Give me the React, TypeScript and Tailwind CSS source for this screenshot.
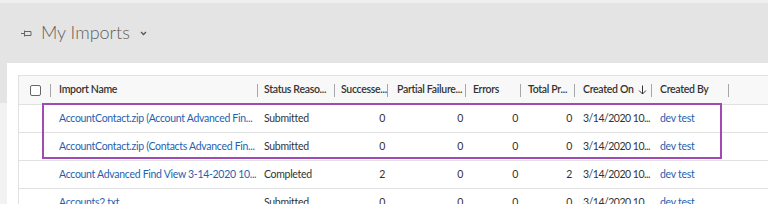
import React from "react";

type Col = { key: string; label: string; w: string; pad: string; num?: boolean; sort?: boolean };

const cols: Col[] = [
  { key: "name", label: "Import Name", w: "w-[206px]", pad: "pl-[8px]" },
  { key: "status", label: "Status Reaso...", w: "w-[76px]", pad: "pl-[6px]" },
  { key: "succ", label: "Successe...", w: "w-[52px]", pad: "pl-[6px]", num: true },
  { key: "partial", label: "Partial Failure...", w: "w-[77px]", pad: "pl-[9px]", num: true },
  { key: "errors", label: "Errors", w: "w-[54px]", pad: "pl-[7px]", num: true },
  { key: "total", label: "Total Pr...", w: "w-[53px]", pad: "pl-[7px]", num: true },
  { key: "created", label: "Created On", w: "w-[76px]", pad: "pl-[8px]", sort: true },
  { key: "by", label: "Created By", w: "w-[76px]", pad: "pl-[8px]" },
];

const rows: Record<string, string>[] = [
  { name: "AccountContact.zip (Account Advanced Fin...", status: "Submitted", succ: "0", partial: "0", errors: "0", total: "0", created: "3/14/2020 10...", by: "dev test" },
  { name: "AccountContact.zip (Contacts Advanced Fin...", status: "Submitted", succ: "0", partial: "0", errors: "0", total: "0", created: "3/14/2020 10...", by: "dev test" },
  { name: "Account Advanced Find View 3-14-2020 10...", status: "Completed", succ: "2", partial: "0", errors: "0", total: "2", created: "3/14/2020 10...", by: "dev test" },
  { name: "Accounts2.txt", status: "Submitted", succ: "0", partial: "0", errors: "0", total: "0", created: "3/14/2020 10...", by: "dev test" },
];

function Sep() {
  return <span className="w-px h-[13px] bg-[#a6a6a6] shrink-0" />;
}

export default function App() {
  return (
    <div
      className="w-[768px] h-[204px] overflow-hidden bg-[#e4e4e4] flex flex-col text-[#333]"
      style={{ fontFamily: 'Lato, "Open Sans", sans-serif' }}
    >
      {/* top strip */}
      <div className="h-[3px] bg-[#efefef] shrink-0" />

      {/* Title */}
      <div className="h-[60px] shrink-0 flex items-center pl-[21px] pb-[1px]">
        <svg width="11" height="7" viewBox="0 0 11 7" className="mr-[9px] mt-[2px]">
          <path d="M0 3.5H3.5M3.5 0.5V6.5M3.5 1.5H10V5.5H3.5" fill="none" stroke="#666" strokeWidth="1" />
        </svg>
        <span className="text-[18px] font-light text-[#5f5f5f]">My Imports</span>
        <svg width="7" height="5" viewBox="0 0 7 5" className="ml-[10px] mt-[1px]">
          <path d="M1 1L3.5 3.5L6 1" fill="none" stroke="#555" strokeWidth="1.3" />
        </svg>
      </div>

      {/* Body */}
      <div className="flex-1 flex min-h-0">
        <div className="w-[7px] shrink-0 flex flex-col">
          <div className="h-[40px] bg-[#e4e4e4]" />
          <div className="flex-1 bg-[#f2f2f2]" />
        </div>
        <div className="flex-1 bg-white pt-[12px] pl-[11px]">
          <div className="relative border-l border-t border-[#e1e1e1] text-[10.5px] tracking-[-0.3px]">
            {/* Header */}
            <div className="h-[29px] bg-[#f8f8f8] border-b border-[#e1e1e1] flex items-center text-[#333]">
              <div className="w-[31px] shrink-0 flex items-center justify-center pl-[1px]">
                <span className="w-[11px] h-[11px] border border-[#666] rounded-[2px] bg-white" />
              </div>
              <Sep />
              {cols.map((c) => (
                <React.Fragment key={c.key}>
                  <div className={`${c.w} ${c.pad} shrink-0 whitespace-nowrap overflow-hidden flex items-center font-semibold`}>
                    <span>{c.label}</span>
                    {c.sort && (
                      <svg width="9" height="10" viewBox="0 0 9 10" className="ml-[4px]">
                        <path d="M4.5 0.5V9M1 5.5L4.5 9L8 5.5" fill="none" stroke="#333" strokeWidth="1" />
                      </svg>
                    )}
                  </div>
                  <Sep />
                </React.Fragment>
              ))}
            </div>

            {/* Rows */}
            {rows.map((r, ri) => (
              <div key={ri} className="h-[28px] border-b border-[#e1e1e1] flex items-center whitespace-nowrap">
                <div className="w-[32px] shrink-0" />
                {cols.map((c) => {
                  const link = c.key === "name" || c.key === "by";
                  return (
                    <div
                      key={c.key}
                      className={`${c.w} shrink-0 mr-px ${c.num ? "text-right pr-[2px]" : c.pad} ${c.key === "created" ? "tracking-[-0.5px]" : ""} ${link ? "text-[#1f5fb0]" : "text-[#333]"}`}
                    >
                      {r[c.key]}
                    </div>
                  );
                })}
              </div>
            ))}

            {/* Highlight box */}
            <div className="absolute left-[23px] top-[27px] w-[680px] h-[56px] border-2 border-[#a24ab4] pointer-events-none" />
          </div>
        </div>
      </div>
    </div>
  );
}
